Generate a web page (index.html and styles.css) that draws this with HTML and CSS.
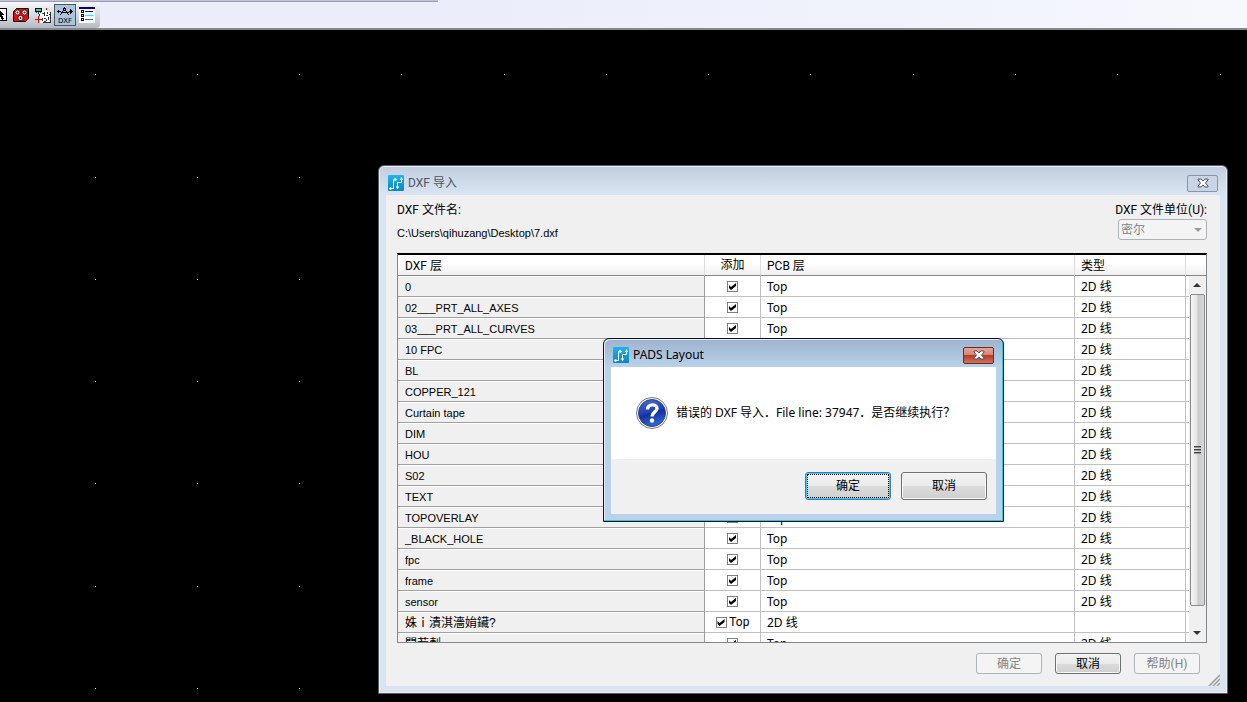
FILE: index.html
```html
<!DOCTYPE html>
<html lang="zh-CN">
  <head>
    <meta charset="utf-8">
    <meta name="viewport" content="width=device-width, initial-scale=1.0">
    <title>PADS Layout</title>
    <link rel="stylesheet" href="styles.css">
  </head>
  <body>
    <svg class="defs" aria-hidden="true">
      <defs>
        <linearGradient id="logo-bg" x1="0" y1="0" x2="0" y2="1">
          <stop offset="0" stop-color="#1cb4f0" />
          <stop offset="1" stop-color="#0a86bd" />
        </linearGradient>
        <linearGradient id="ask-bg" x1="0" y1="0" x2="0.3" y2="1">
          <stop offset="0" stop-color="#4a72d8" />
          <stop offset="0.55" stop-color="#1c3fb4" />
          <stop offset="0.6" stop-color="#132f9a" />
          <stop offset="1" stop-color="#2f62d8" />
        </linearGradient>
        <symbol id="logo" viewBox="0 0 16 16">
          <rect width="16" height="16" rx="1" fill="url(#logo-bg)" />
          <path d="M2 13.500h3.500V4.500H7M9.500 12V7.500H13.500V4" fill="none" stroke="#fff" />
          <path d="M6.500 2.500l3 2-3 2zM11.800 5l1.700-3L15.200 5zM7.800 11.500h3.400l-1.700 3z" fill="#fff" />
          <circle cx="2.500" cy="13.500" r="1.300" fill="#fff" />
        </symbol>
        <symbol id="cross" viewBox="0 0 12 10">
          <path d="M1 1h3l2 2 2-2h3v1L8.500 5 11 8v1H8L6 7 4 9H1V8l2.500-3L1 2z" fill="#fff" stroke="#4c5663" />
        </symbol>
      </defs>
    </svg>

    <header id="toolbar">
      <div class="tools">
        <button class="tool cut" aria-label="选择">
          <svg width="7" height="16" viewBox="9 0 7 16" shape-rendering="crispEdges">
            <path d="M0 1.500h15.500v12H0z" fill="#fff" stroke="#000" />
            <path d="M7 2l7 6h-3l2 4-2 1-2-4-2 2z" fill="#000" />
          </svg>
        </button>
        <button class="tool" aria-label="元件">
          <svg width="16" height="16" viewBox="0 0 16 16">
            <path d="M3.500 1.500h12v10l-3 3H.5v-10z" fill="#f00" stroke="#000" />
            <g fill="#fff" stroke="#000" stroke-width=".7">
              <circle cx="4.500" cy="5.500" r="2.500" />
              <circle cx="11.500" cy="5.500" r="2.500" />
              <circle cx="7.500" cy="11" r="2.500" />
            </g>
            <path d="M3.500 5.500h2M10.500 5.500h2M6.500 11h2M4.500 4.500v2M11.500 4.500v2M7.500 10v2" stroke="#333" />
          </svg>
        </button>
        <button class="tool" aria-label="添加">
          <svg width="16" height="16" viewBox="0 0 16 16" shape-rendering="crispEdges">
            <path d="M5 6h2V4h3V2h2v2h2v2h2v10H5z" fill="#fff" />
            <path d="M.5 1.500h6v3h-6z" fill="#2cc" stroke="#000" />
            <path d="M1.500 5v1M3.500 5v2M5.500 5v1M7 6.500h2M4.500 7v2M9.500 5v4M11 8.500h2M12.500 5v2M7.500 11v3M9 11.500h2M11.500 12v2M13.500 10v3M9 14.500h2M15.500 5v10M8 15.500h8" fill="none" stroke="#333" />
            <path d="M3.500 9v7M0 12.500h7M11.500 1v2M14.500 7v1" stroke="#e00" />
          </svg>
        </button>
        <button class="tool active" aria-label="DXF">
          <svg width="18" height="18" viewBox="0 0 18 18">
            <path d="M1 5.500h3M4 5.500l2 1h6l2-1h3M8.500 1v2M2.500 4v3M14.500 3v5M15.500 4v3M8 4L4 9M9 4l4 5" fill="none" stroke="#000" shape-rendering="crispEdges" />
            <path d="M7.500 2.500h2v2h-2z" fill="#a8c4e0" stroke="#000" shape-rendering="crispEdges" />
            <text x="9" y="17" text-anchor="middle">DXF</text>
          </svg>
        </button>
        <button class="tool" aria-label="选项">
          <svg width="16" height="16" viewBox="0 0 16 16" shape-rendering="crispEdges">
            <path d="M0 0h16v16H0z" fill="#fff" />
            <path d="M0 0h16v2H0z" fill="#000080" />
            <path d="M2.500 3.500h2v2h-2zM2.500 7.500h2v2h-2zM2.500 11.500h2v2h-2z" fill="none" stroke="#000" />
            <path d="M6 4.500h8" stroke="#00f" />
            <path d="M6 8.500h8" stroke="#0ff" />
            <path d="M6 12.500h8" stroke="#008080" />
          </svg>
        </button>
      </div>
    </header>

    <main id="workspace">
      <svg class="grid-dots" aria-hidden="true" shape-rendering="crispEdges">
        <defs>
          <path id="dots" d="M95 .5h1m101 0h1m101 0h1m101 0h1m102 0h1m101 0h1m101 0h1m101 0h1m102 0h1m101 0h1m101 0h1m102 0h1" stroke="#fff" />
        </defs>
        <use href="#dots" y="44" />
        <use href="#dots" y="147" />
        <use href="#dots" y="249" />
        <use href="#dots" y="351" />
        <use href="#dots" y="453" />
        <use href="#dots" y="556" />
        <use href="#dots" y="658" />
      </svg>

      <section class="window" id="import-window">
        <div class="titlebar">
          <svg class="logo"><use href="#logo" /></svg>
          <h1>DXF 导入</h1>
          <button class="close" aria-label="关闭"><svg><use href="#cross" /></svg></button>
        </div>
        <div class="import-body">
          <div class="file-row">
            <div class="file-name">
              <p>DXF 文件名:</p>
              <p class="path">C:\Users\qihuzang\Desktop\7.dxf</p>
            </div>
            <div class="unit">
              <label for="unit">DXF 文件单位(U):</label>
              <div class="unit-select">
                <select id="unit" disabled>
                  <option>密尔</option>
                </select>
              </div>
            </div>
          </div>

          <div class="layer-list">
            <table>
              <colgroup>
                <col class="col-name">
                <col class="col-add">
                <col>
                <col class="col-type">
                <col class="col-end">
              </colgroup>
              <thead>
                <tr><th>DXF 层</th><th>添加</th><th>PCB 层</th><th>类型</th><th></th></tr>
              </thead>
              <tbody>
                <tr><td>0</td><td><input type="checkbox" aria-label="0" checked></td><td>Top</td><td>2D 线</td><td></td></tr>
                <tr><td>02___PRT_ALL_AXES</td><td><input type="checkbox" aria-label="02___PRT_ALL_AXES" checked></td><td>Top</td><td>2D 线</td><td></td></tr>
                <tr><td>03___PRT_ALL_CURVES</td><td><input type="checkbox" aria-label="03___PRT_ALL_CURVES" checked></td><td>Top</td><td>2D 线</td><td></td></tr>
                <tr><td>10 FPC</td><td><input type="checkbox" aria-label="10 FPC" checked></td><td>Top</td><td>2D 线</td><td></td></tr>
                <tr><td>BL</td><td><input type="checkbox" aria-label="BL" checked></td><td>Top</td><td>2D 线</td><td></td></tr>
                <tr><td>COPPER_121</td><td><input type="checkbox" aria-label="COPPER_121" checked></td><td>Top</td><td>2D 线</td><td></td></tr>
                <tr><td>Curtain tape</td><td><input type="checkbox" aria-label="Curtain tape" checked></td><td>Top</td><td>2D 线</td><td></td></tr>
                <tr><td>DIM</td><td><input type="checkbox" aria-label="DIM" checked></td><td>Top</td><td>2D 线</td><td></td></tr>
                <tr><td>HOU</td><td><input type="checkbox" aria-label="HOU" checked></td><td>Top</td><td>2D 线</td><td></td></tr>
                <tr><td>S02</td><td><input type="checkbox" aria-label="S02" checked></td><td>Top</td><td>2D 线</td><td></td></tr>
                <tr><td>TEXT</td><td><input type="checkbox" aria-label="TEXT" checked></td><td>Top</td><td>2D 线</td><td></td></tr>
                <tr><td>TOPOVERLAY</td><td><input type="checkbox" aria-label="TOPOVERLAY" checked></td><td>Top</td><td>2D 线</td><td></td></tr>
                <tr><td>_BLACK_HOLE</td><td><input type="checkbox" aria-label="_BLACK_HOLE" checked></td><td>Top</td><td>2D 线</td><td></td></tr>
                <tr><td>fpc</td><td><input type="checkbox" aria-label="fpc" checked></td><td>Top</td><td>2D 线</td><td></td></tr>
                <tr><td>frame</td><td><input type="checkbox" aria-label="frame" checked></td><td>Top</td><td>2D 线</td><td></td></tr>
                <tr><td>sensor</td><td><input type="checkbox" aria-label="sensor" checked></td><td>Top</td><td>2D 线</td><td></td></tr>
                <tr class="cjk"><td>姝ｉ潰淇濇姢鑶?</td><td><label><input type="checkbox" checked> Top</label></td><td>2D 线</td><td></td><td></td></tr>
                <tr class="cjk"><td>闃茬剨</td><td><input type="checkbox" aria-label="闃茬剨" checked></td><td>Top</td><td>2D 线</td><td></td></tr>
              </tbody>
            </table>
            <div class="scrollbar">
              <button class="arrow up" aria-label="向上"></button>
              <div class="thumb"><i></i><i></i><i></i></div>
              <button class="arrow down" aria-label="向下"></button>
            </div>
          </div>

          <div class="actions">
            <button class="btn" disabled>确定</button>
            <button class="btn">取消</button>
            <button class="btn" disabled>帮助(H)</button>
          </div>
          <svg class="grip" viewBox="0 0 12 12">
            <path d="M1 12L12 1M5 12l7-7M9 12l3-3" stroke="#999" stroke-width="1.500" />
          </svg>
        </div>
      </section>

      <section class="window" id="error-window" role="alertdialog" aria-labelledby="error-title">
        <div class="titlebar">
          <svg class="logo"><use href="#logo" /></svg>
          <h2 id="error-title">PADS Layout</h2>
          <button class="close" aria-label="关闭"><svg><use href="#cross" /></svg></button>
        </div>
        <div class="message">
          <svg class="ask" viewBox="0 0 32 32">
            <circle cx="16" cy="16" r="15.500" fill="#fff" stroke="#777" />
            <circle cx="16" cy="16" r="13.500" fill="url(#ask-bg)" stroke="#26418f" />
            <path d="M11.500 12.500c0-6 9.500-6 9.500-1 0 3.500-5 3.500-5 8" fill="none" stroke="#fff" stroke-width="3.400" />
            <circle cx="16" cy="23.500" r="2.200" fill="#fff" />
          </svg>
          <p>错误的 DXF 导入．File line: 37947．是否继续执行？</p>
        </div>
        <div class="error-actions">
          <button class="btn focused">确定</button>
          <button class="btn">取消</button>
        </div>
      </section>
    </main>
  </body>
</html>
```
FILE: styles.css
```css
* {
  box-sizing: border-box;
}

body {
  margin: 0;
  height: 100vh;
  display: flex;
  flex-direction: column;
  overflow: hidden;
  background: #000;
  color: #000;
  font-family: Roboto, "Noto Sans CJK SC", sans-serif;
  font-size: 12px;
  line-height: 16px;
}

h1,
h2,
p {
  margin: 0;
  font-size: 12px;
  font-weight: normal;
}

button,
select {
  font: inherit;
  color: inherit;
}

.defs {
  position: absolute;
  width: 0;
  height: 0;
}

/* Toolbar */
#toolbar {
  flex: none;
  height: 30px;
  padding-top: 2px;
  background: linear-gradient(to right, #ebedfa 40%, #f6f8fd);
  border-bottom: 2px solid #858985;
}

#toolbar::before {
  content: "";
  display: block;
  width: 438px;
  height: 2px;
  margin-top: -2px;
  background: linear-gradient(#c0c3d6 50%, #9c9db4 50%);
}

.tools {
  display: flex;
  align-items: center;
  width: 100px;
  height: 26px;
  background: linear-gradient(#f7f8fa, #b6bac4);
  border-radius: 0 0 4px 0;
}

.tool {
  display: flex;
  align-items: center;
  justify-content: center;
  width: 22px;
  height: 22px;
  padding: 0;
  border: 0;
  background: none;
}

.tool.cut {
  width: 10px;
  justify-content: flex-start;
}

.tool.active {
  background: #a8c4e0;
  border: 1px solid #4c5560;
}

.tool text {
  font-family: "DejaVu Sans", sans-serif;
  font-size: 7px;
}

/* Design canvas */
#workspace {
  flex: 1;
  position: relative;
  overflow: hidden;
}

.grid-dots {
  display: block;
  width: 100%;
  height: 100%;
}

/* Windows */
.window {
  position: absolute;
  display: flex;
  flex-direction: column;
  padding: 0 7px 7px;
  border-radius: 6px 6px 0 0;
}

.titlebar {
  display: flex;
  align-items: center;
  gap: 4px;
  height: 28px;
  padding: 4px 2px 0;
}

.titlebar h1,
.titlebar h2 {
  flex: 1;
}

.logo {
  width: 16px;
  height: 16px;
}

.close {
  display: flex;
  align-items: center;
  justify-content: center;
  width: 31px;
  height: 17px;
  padding: 0;
  border: 1px solid #8795a8;
  border-radius: 2px;
  background: #c9d5e5;
}

.close svg {
  width: 12px;
  height: 10px;
}

#import-window {
  left: 378px;
  right: 19px;
  top: 135px;
  bottom: 8px;
  border: 1px solid #5b5d62;
  background: linear-gradient(#c1cedf, #d8e4f1 28px);
  box-shadow: inset 0 0 0 1px #e9eff6;
}

#import-window .titlebar {
  height: 29px;
  padding-top: 5px;
}

#import-window h1 {
  color: #4d5560;
}

.import-body {
  flex: 1;
  min-height: 0;
  display: flex;
  flex-direction: column;
  position: relative;
  padding: 7px 13px 12px 11px;
  background: #f0f0f0;
}

.file-row {
  display: flex;
  justify-content: space-between;
  height: 51px;
}

.file-name {
  display: flex;
  flex-direction: column;
  gap: 7px;
}

.unit {
  display: flex;
  flex-direction: column;
  align-items: flex-end;
  gap: 1px;
}

.unit-select {
  position: relative;
}

.unit-select::after {
  content: "";
  position: absolute;
  right: 5px;
  top: 9px;
  border: 4px solid transparent;
  border-top-color: #9b9b9b;
}

select {
  appearance: none;
  display: block;
  width: 89px;
  height: 21px;
  padding: 0 2px;
  border: 1px solid #adb2b5;
  border-radius: 3px;
  background: #f4f4f4;
  color: #838383;
}

select:disabled {
  opacity: 1;
}

/* Layer list */
.layer-list {
  flex: 1;
  min-height: 0;
  display: grid;
  grid-template-rows: minmax(0, 1fr);
  overflow: hidden;
  border: 1px solid #828790;
  border-top: 2px solid #000;
  background: #fff;
}

table {
  grid-area: 1 / 1;
  align-self: start;
  width: 100%;
  table-layout: fixed;
  border-collapse: separate;
  border-spacing: 0;
}

.col-name {
  width: 307px;
}

.col-add {
  width: 56px;
}

.col-type {
  width: 111px;
}

.col-end {
  width: 20px;
}

th,
td {
  height: 21px;
  padding: 1px 6px 0;
  text-align: left;
  font-weight: normal;
  white-space: nowrap;
  overflow: hidden;
}

th:first-child,
td:first-child {
  padding-left: 7px;
}

th {
  border-right: 1px solid #dcdcdc;
  border-bottom: 1px solid #828790;
  background: linear-gradient(#fff 40%, #f0f0f0);
}

th:last-child {
  border-right: 0;
}

td {
  border-right: 1px solid #c0c0c0;
  border-bottom: 1px solid #c0c0c0;
}

td:first-child {
  border-right-color: #a0a0a0;
  border-bottom-color: #a0a0a0;
  background: #f0f0f0;
  box-shadow: inset 0 1px #fff;
}

td:first-child,
.path {
  font-family: "Liberation Sans", "Noto Sans CJK SC", sans-serif;
  font-size: 11px;
}

.cjk td:first-child {
  font-size: 12px;
}

th:nth-child(2),
td:nth-child(2) {
  padding: 0;
  text-align: center;
}

td:last-child {
  border-right: 0;
}

td:nth-child(n + 3) {
  font-family: "Noto Sans", "Noto Sans CJK SC", sans-serif;
}

input[type="checkbox"] {
  appearance: none;
  width: 11px;
  height: 11px;
  margin: 0;
  border: 1px solid #808080;
  background: #fff;
  vertical-align: -2px;
}

input[type="checkbox"]:checked::after {
  content: "";
  display: block;
  width: 9px;
  height: 9px;
  background: #000;
  clip-path: polygon(1px 3px, 3px 5px, 8px 1px, 8px 4px, 3px 8px, 1px 6px);
}

.scrollbar {
  grid-area: 1 / 1;
  justify-self: end;
  display: flex;
  flex-direction: column;
  width: 17px;
  margin-top: 21px;
  padding-right: 1px;
  background: #f0f0f0;
}

.arrow {
  display: flex;
  align-items: center;
  justify-content: center;
  height: 18px;
  padding: 0;
  border: 0;
  background: #f0f0f0;
}

.arrow::before {
  content: "";
  border: 4px solid transparent;
}

.arrow.up::before {
  margin-top: -4px;
  border-bottom-color: #333;
}

.arrow.down::before {
  margin-top: 4px;
  border-top-color: #333;
}

.thumb {
  flex: 1;
  display: flex;
  flex-direction: column;
  align-items: center;
  justify-content: center;
  gap: 1px;
  margin: 0 0 18px 1px;
  border: 1px solid #8c8c8c;
  border-radius: 2px;
  background: linear-gradient(to right, #f5f5f5, #e3e3e3 48%, #c9c9c9 52%, #d8d8d8);
}

.thumb i {
  width: 7px;
  height: 2px;
  border-top: 1px solid #444;
  background: #999;
}

.btn {
  width: 66px;
  height: 21px;
  padding: 0;
  border: 1px solid #707070;
  border-radius: 3px;
  background: linear-gradient(#f2f2f2, #ebebeb 50%, #dcdcdc 50%, #cfcfcf);
  box-shadow: inset 0 0 0 1px #f8f8f8;
}

.btn:disabled {
  border-color: #adb2b5;
  background: #f4f4f4;
  color: #838383;
}

.actions {
  display: flex;
  justify-content: flex-end;
  gap: 13px;
  padding: 10px 7px 0 0;
}

.grip {
  position: absolute;
  right: 0;
  bottom: 0;
  width: 12px;
  height: 12px;
}

/* Error message */
#error-window {
  left: 603px;
  top: 308px;
  width: 401px;
  border: 1px solid #101418;
  background: linear-gradient(#9db3cf, #b9d1ea 28px);
  box-shadow: inset -1px -1px #2bc8e4, inset 1px 1px #e4edf7;
  font-family: "Noto Sans", "Noto Sans CJK SC", sans-serif;
}

#error-window .close {
  border-color: #6b2a24;
  background: linear-gradient(#e5a497, #d78675 45%, #b83b22 50%, #d0725e);
}

.message {
  display: flex;
  align-items: center;
  gap: 8px;
  height: 92px;
  padding: 0 25px;
  background: #fff;
}

.message p {
  white-space: nowrap;
}

.ask {
  flex: none;
  width: 32px;
  height: 32px;
}

.error-actions {
  display: flex;
  justify-content: flex-end;
  gap: 10px;
  padding: 13px 9px 14px;
  background: #f0f0f0;
}

.error-actions .btn {
  width: 86px;
  height: 28px;
}

.btn.focused {
  border-color: #3c7fb1;
  box-shadow: inset 0 0 0 1px #3fc8f0;
  outline: 1px dotted #000;
  outline-offset: -3px;
}
```
